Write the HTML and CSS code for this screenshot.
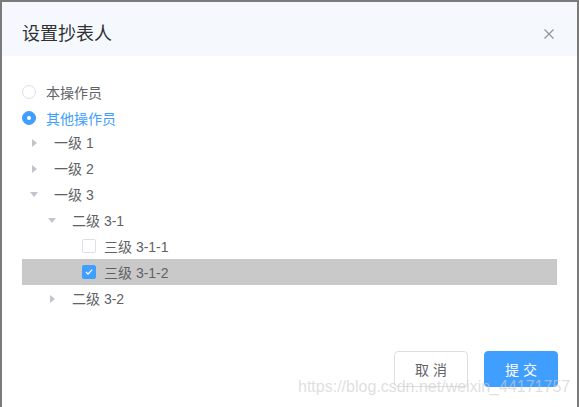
FILE: index.html
```html
<!DOCTYPE html>
<html lang="zh-CN">
<head>
<meta charset="utf-8">
<title>设置抄表人</title>
<link rel="stylesheet" href="styles.css">
</head>
<body>
<div class="dialog">
  <div class="dialog-header">
    <span class="dialog-title">设置抄表人</span>
    <button class="close-btn" aria-label="关闭">
      <svg width="10" height="10" viewBox="0 0 10 10"><path d="M0.5 0.5 L9.5 9.5 M9.5 0.5 L0.5 9.5" stroke="#909399" stroke-width="1.2" fill="none"/></svg>
    </button>
  </div>
  <div class="dialog-body">
    <div class="radio-group">
      <label class="radio"><span class="radio-input"></span><span class="radio-label">本操作员</span></label>
      <label class="radio is-checked"><span class="radio-input"></span><span class="radio-label">其他操作员</span></label>
    </div>
    <div class="tree">
      <div class="node lv1"><span class="caret right"></span><span class="node-label">一级 1</span></div>
      <div class="node lv1"><span class="caret right"></span><span class="node-label">一级 2</span></div>
      <div class="node lv1"><span class="caret down"></span><span class="node-label">一级 3</span></div>
      <div class="node lv2"><span class="caret down"></span><span class="node-label">二级 3-1</span></div>
      <div class="node lv3"><span class="caret leaf"></span><span class="checkbox"></span><span class="node-label">三级 3-1-1</span></div>
      <div class="node lv3 is-current"><span class="caret leaf"></span><span class="checkbox is-checked"><svg width="14" height="14" viewBox="0 0 14 14"><path d="M4 7 L6 9.2 L10.2 4.6" stroke="#fff" stroke-width="1.2" fill="none"/></svg></span><span class="node-label">三级 3-1-2</span></div>
      <div class="node lv2"><span class="caret right"></span><span class="node-label">二级 3-2</span></div>
    </div>
  </div>
  <div class="dialog-footer">
    <button class="btn btn-default">取 消</button>
    <button class="btn btn-primary">提 交</button>
  </div>
  <div class="watermark">https://blog.csdn.net/weixin_44171757</div>
</div>
</body>
</html>
```
FILE: styles.css
```css
html, body {
  margin: 0;
  padding: 0;
  height: 100%;
}
body {
  background: #7b7b7b;
  font-family: "Liberation Sans", "Noto Sans CJK SC", sans-serif;
  font-size: 14px;
  color: #606266;
  overflow: hidden;
}
.dialog {
  position: relative;
  margin: 2px 2px 0 2px;
  height: calc(100% - 2px);
  background: #fff;
  display: flex;
  flex-direction: column;
}
.dialog-header {
  height: 54px;
  box-sizing: border-box;
  padding: 20px 20px 10px;
  background: #f5f9fe;
  display: flex;
  align-items: center;
  justify-content: space-between;
}
.dialog-title {
  font-size: 18px;
  line-height: 24px;
  color: #303133;
}
.close-btn {
  border: 0;
  background: transparent;
  padding: 0 3px;
  margin: 0 -3px 0 0;
  width: 16px;
  height: 16px;
  display: flex;
  align-items: center;
  justify-content: center;
  box-sizing: content-box;
}
.dialog-body {
  flex: 1;
  padding: 23px 20px 0;
}
.radio-group {
  display: flex;
  flex-direction: column;
}
.radio {
  height: 26px;
  display: flex;
  align-items: center;
  color: #606266;
}
.radio-input {
  width: 14px;
  height: 14px;
  box-sizing: border-box;
  border: 1px solid #dcdfe6;
  border-radius: 50%;
  background: #fff;
  display: flex;
  align-items: center;
  justify-content: center;
}
.radio-label {
  padding-left: 10px;
}
.radio.is-checked .radio-input {
  background: #409eff;
  border-color: #409eff;
}
.radio.is-checked .radio-input::after {
  content: "";
  width: 4px;
  height: 4px;
  border-radius: 50%;
  background: #fff;
}
.radio.is-checked .radio-label {
  color: #409eff;
}
.tree {
  margin-top: -2px;
}
.node {
  height: 26px;
  display: flex;
  align-items: center;
  color: #606266;
}
.node.lv2 { padding-left: 18px; }
.node.lv3 { padding-left: 36px; }
.node.is-current { background: #c9c9c9; }
.caret {
  width: 12px;
  height: 12px;
  padding: 6px;
  box-sizing: content-box;
  position: relative;
}
.caret.right::before {
  content: "";
  position: absolute;
  left: 10px;
  top: 9px;
  border-left: 5px solid #c0c4cc;
  border-top: 4px solid transparent;
  border-bottom: 4px solid transparent;
}
.caret.down::before {
  content: "";
  position: absolute;
  left: 8px;
  top: 10px;
  border-top: 5px solid #c0c4cc;
  border-left: 4px solid transparent;
  border-right: 4px solid transparent;
}
.node-label {
  padding-left: 8px;
}
.checkbox {
  width: 14px;
  height: 14px;
  box-sizing: border-box;
  border: 1px solid #dcdfe6;
  border-radius: 2px;
  background: #fff;
  display: flex;
  align-items: center;
  justify-content: center;
}
.checkbox svg { margin: -1px; }
.checkbox.is-checked {
  background: #409eff;
  border-color: #409eff;
}
.dialog-footer {
  display: flex;
  justify-content: flex-end;
  gap: 16px;
  padding: 0 19px 20px 20px;
}
.btn {
  width: 74px;
  height: 36px;
  box-sizing: border-box;
  border-radius: 4px;
  font-family: "Liberation Sans", "Noto Sans CJK SC", sans-serif;
  font-size: 14px;
  padding: 0;
}
.btn-default {
  background: #fff;
  border: 1px solid #dcdfe6;
  color: #606266;
}
.btn-primary {
  background: #409eff;
  border: 1px solid #409eff;
  color: #fff;
}
.watermark {
  position: absolute;
  left: 296px;
  top: 375px;
  font-size: 16px;
  line-height: 20px;
  color: rgba(205, 205, 205, 0.65);
  white-space: nowrap;
  pointer-events: none;
}
```
